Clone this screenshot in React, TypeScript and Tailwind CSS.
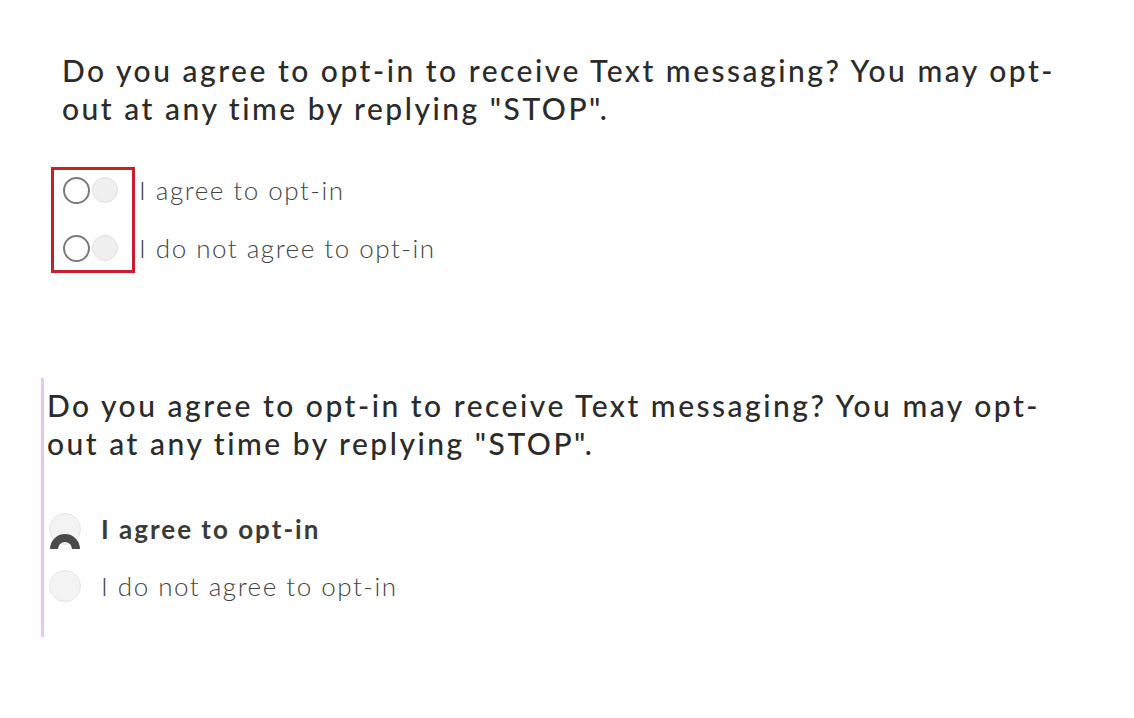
import React from "react";

const font = { fontFamily: "Lato, 'Liberation Sans', sans-serif" };

function Question() {
  return (
    <h2 className="whitespace-nowrap text-[30px] font-medium leading-[38px] tracking-[2.5px] text-[#2b2b2b]">
      Do you agree to opt-in to receive Text messaging? You may opt-
      <br />
      out at any time by replying "STOP".
    </h2>
  );
}

function OldOptions() {
  const options = ["I agree to opt-in", "I do not agree to opt-in"];
  return (
    <div className="relative mt-[50px]">
      <div className="pointer-events-none absolute left-[-11px] top-[-10px] h-[106px] w-[84px] border-[3px] border-[#c8202a]" />
      <div className="flex flex-col gap-[32px]">
        {options.map((label) => (
          <label key={label} className="flex h-[26px] items-center">
            <span className="ml-[1px] h-[27px] w-[27px] rounded-full border-2 border-[#7a7a7a] bg-white" />
            <span className="ml-[2px] h-[26px] w-[26px] rounded-full border border-[#e2e2e2] bg-[#efefef]" />
            <span className="ml-[21px] text-[26px] font-light tracking-[1.5px] text-[#444]">{label}</span>
          </label>
        ))}
      </div>
    </div>
  );
}

function NewOptions() {
  return (
    <div className="mt-[51px] flex flex-col gap-[25px]">
      <label className="flex h-[32px] items-center">
        <span className="relative ml-[2px] h-[32px] w-[32px] rounded-full border border-[#e6e6e6] bg-[#f3f3f3]">
          <svg className="absolute left-0 top-[16px]" width="30" height="20" viewBox="0 0 30 20">
            <path d="M0 19 A15 15 0 0 1 30 19 L22 19 A7 7 0 0 0 8 19 Z" fill="#4a4a4a" />
          </svg>
        </span>
        <span className="ml-[20px] text-[26px] font-bold tracking-[2px] text-[#3a3a3a]">I agree to opt-in</span>
      </label>
      <label className="flex h-[32px] items-center">
        <span className="ml-[2px] h-[32px] w-[32px] rounded-full border border-[#e6e6e6] bg-[#f3f3f3]" />
        <span className="ml-[20px] text-[26px] font-light tracking-[1.5px] text-[#444]">I do not agree to opt-in</span>
      </label>
    </div>
  );
}

export default function App() {
  return (
    <div className="min-h-screen w-full bg-white" style={font}>
      <section className="pl-[62px] pt-[51px]">
        <Question />
        <OldOptions />
      </section>
      <section className="ml-[41px] mt-[117px] w-[1050px] border-l-[3px] border-[#e5c8ef] pb-[35px] pl-[3px] pt-[8px]">
        <Question />
        <NewOptions />
      </section>
    </div>
  );
}
